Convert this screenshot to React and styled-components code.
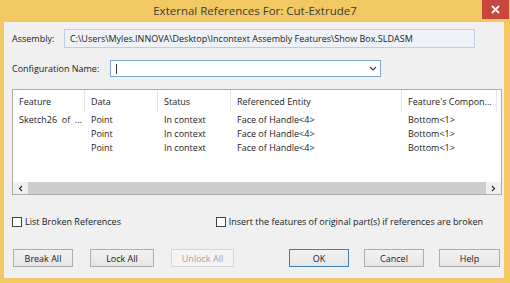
import React from "react";
import styled, { createGlobalStyle } from "styled-components";

const Global = createGlobalStyle`
  html, body { margin: 0; padding: 0; background: #f2c862; }
  body { font-family: "Open Sans", "Noto Sans", sans-serif; }
`;

const Frame = styled.div`
  width: 510px;
  height: 283px;
  background: #f2c862;
  display: flex;
  flex-direction: column;
  box-sizing: border-box;
  overflow: hidden;
`;

const TitleBar = styled.div`
  height: 22px;
  display: grid;
  grid-template-columns: 1fr auto 1fr;
  align-items: start;
`;

const Title = styled.div`
  grid-column: 2;
  font-size: 11.5px;
  line-height: 22px;
  color: #3a3a3a;
  white-space: nowrap;
`;

const CloseButton = styled.div`
  grid-column: 3;
  justify-self: end;
  width: 27px;
  height: 19px;
  margin-right: 1px;
  background: #c9463e;
  display: flex;
  align-items: center;
  justify-content: center;
`;

const Client = styled.div`
  flex: 1;
  margin: 0 6px 5px 4px;
  background: #f0f0f0;
  display: flex;
  flex-direction: column;
  padding: 7px 2px 0 8px;
  font-size: 9px;
  color: #1a1a1a;
`;

const FieldRow = styled.div`
  display: flex;
  align-items: center;
  margin-top: ${(p) => p.$top || 0}px;
`;

const Label = styled.div`
  width: ${(p) => p.$w}px;
  white-space: nowrap;
`;

const ReadOnlyBox = styled.div`
  width: 411px;
  height: 19px;
  box-sizing: border-box;
  border: 1px solid #b8cfe4;
  background: #eef2f6;
  padding-left: 5px;
  display: flex;
  align-items: center;
  white-space: nowrap;
`;

const Combo = styled.div`
  width: 271px;
  height: 17px;
  box-sizing: border-box;
  border: 1px solid #7fa6d4;
  background: #fff;
  display: flex;
  align-items: center;
  justify-content: space-between;
  padding: 0 3px 0 5px;
`;

const Caret = styled.div`
  width: 1px;
  height: 10px;
  background: #333;
`;

const TablePanel = styled.div`
  margin-top: 12px;
  height: 106px;
  box-sizing: border-box;
  border: 1px solid #adadad;
  background: #fff;
  display: flex;
  flex-direction: column;
`;

const cols = "72px 73px 73px 171px 95px 1fr";

const HeaderRow = styled.div`
  display: grid;
  grid-template-columns: ${cols};
  height: 22px;
`;

const HeaderCell = styled.div`
  padding-left: 6px;
  display: flex;
  align-items: center;
  border-right: ${(p) => (p.$last ? "none" : "1px solid #e6e6e6")};
  white-space: nowrap;
  overflow: hidden;
`;

const Body = styled.div`
  flex: 1;
`;

const Row = styled.div`
  display: grid;
  grid-template-columns: ${cols};
  height: 14px;
  align-items: center;
`;

const Cell = styled.div`
  padding-left: 6px;
  white-space: pre;
  overflow: hidden;
`;

const ScrollBar = styled.div`
  height: 12px;
  display: flex;
  background: #e8e8e8;
`;

const ScrollArrow = styled.div`
  width: 15px;
  display: flex;
  align-items: center;
  justify-content: center;
  background: #f0f0f0;
`;

const Thumb = styled.div`
  flex: 1;
  background: #cdcdcd;
`;

const CheckRow = styled.div`
  display: flex;
  justify-content: space-between;
  align-items: center;
  margin-top: 20px;
  padding-right: 19px;
`;

const CheckLabel = styled.label`
  display: flex;
  align-items: center;
  gap: 3px;
  white-space: nowrap;
`;

const Box = styled.span`
  width: 10px;
  height: 10px;
  box-sizing: border-box;
  border: 1px solid #444;
  background: #fff;
`;

const ButtonRow = styled.div`
  display: flex;
  justify-content: space-between;
  margin-top: 21px;
  padding: 0 2px 0 1px;
`;

const Group = styled.div`
  display: flex;
  gap: ${(p) => p.$gap}px;
`;

const Button = styled.div`
  width: ${(p) => p.$w || 60}px;
  height: 18px;
  box-sizing: border-box;
  border: 1px solid ${(p) => (p.$default ? "#3c7fb1" : p.$disabled ? "#d5d5d5" : "#adadad")};
  background: ${(p) =>
    p.$disabled ? "#f4f4f4" : "linear-gradient(#f2f2f2, #e6e6e6)"};
  color: ${(p) => (p.$disabled ? "#a3a3a3" : "#1a1a1a")};
  display: flex;
  align-items: center;
  justify-content: center;
`;

const rows = [
  ["Sketch26  of  ...", "Point", "In context", "Face of Handle<4>", "Bottom<1>"],
  ["", "Point", "In context", "Face of Handle<4>", "Bottom<1>"],
  ["", "Point", "In context", "Face of Handle<4>", "Bottom<1>"],
];

export default function App() {
  return (
    <>
      <Global />
      <Frame>
        <TitleBar>
          <Title>External References For: Cut-Extrude7</Title>
          <CloseButton>
            <svg width="9" height="9" viewBox="0 0 9 9">
              <path d="M1 1L8 8M8 1L1 8" stroke="#fff" strokeWidth="1.8" />
            </svg>
          </CloseButton>
        </TitleBar>
        <Client>
          <FieldRow>
            <Label $w={52}>Assembly:</Label>
            <ReadOnlyBox>
              C:\Users\Myles.INNOVA\Desktop\Incontext Assembly Features\Show Box.SLDASM
            </ReadOnlyBox>
          </FieldRow>
          <FieldRow $top={12}>
            <Label $w={98}>Configuration Name:</Label>
            <Combo>
              <Caret />
              <svg width="8" height="5" viewBox="0 0 8 5">
                <path d="M1 1L4 4L7 1" stroke="#444" strokeWidth="1.2" fill="none" />
              </svg>
            </Combo>
          </FieldRow>
          <TablePanel>
            <HeaderRow>
              <HeaderCell>Feature</HeaderCell>
              <HeaderCell>Data</HeaderCell>
              <HeaderCell>Status</HeaderCell>
              <HeaderCell>Referenced Entity</HeaderCell>
              <HeaderCell>Feature's Compon...</HeaderCell>
              <HeaderCell $last />
            </HeaderRow>
            <Body>
              {rows.map((r, i) => (
                <Row key={i}>
                  {r.map((c, j) => (
                    <Cell key={j}>{c}</Cell>
                  ))}
                  <Cell />
                </Row>
              ))}
            </Body>
            <ScrollBar>
              <ScrollArrow>
                <svg width="5" height="7" viewBox="0 0 5 7">
                  <path d="M4 1L1.5 3.5L4 6" stroke="#333" strokeWidth="1.2" fill="none" />
                </svg>
              </ScrollArrow>
              <Thumb />
              <ScrollArrow>
                <svg width="5" height="7" viewBox="0 0 5 7">
                  <path d="M1 1L3.5 3.5L1 6" stroke="#333" strokeWidth="1.2" fill="none" />
                </svg>
              </ScrollArrow>
            </ScrollBar>
          </TablePanel>
          <CheckRow>
            <CheckLabel>
              <Box />
              List Broken References
            </CheckLabel>
            <CheckLabel>
              <Box />
              Insert the features of original part(s) if references are broken
            </CheckLabel>
          </CheckRow>
          <ButtonRow>
            <Group $gap={17}>
              <Button $w={60}>Break All</Button>
              <Button $w={64}>Lock All</Button>
              <Button $w={63} $disabled>Unlock All</Button>
            </Group>
            <Group $gap={15}>
              <Button $default>OK</Button>
              <Button>Cancel</Button>
              <Button $w={61}>Help</Button>
            </Group>
          </ButtonRow>
        </Client>
      </Frame>
    </>
  );
}
